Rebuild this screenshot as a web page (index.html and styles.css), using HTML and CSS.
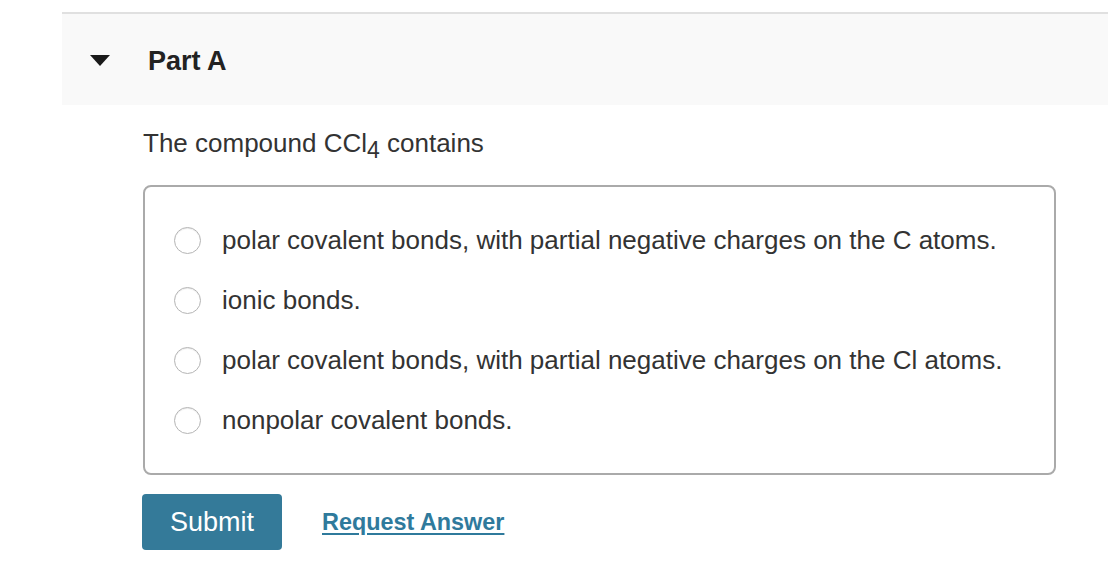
FILE: index.html
```html
<!DOCTYPE html>
<html lang="en">
<head>
<meta charset="utf-8">
<title>Part A</title>
<link rel="stylesheet" href="styles.css">
</head>
<body>
<div class="page">
  <div class="part-header">
    <svg class="caret" width="20" height="11" viewBox="0 0 20 11" aria-hidden="true"><polygon points="0,0 20,0 10,11" fill="#1a1a1a"/></svg>
    <h2 class="part-title">Part A</h2>
  </div>
  <div class="part-body">
    <p class="question">The compound CCl<sub class="sub">4</sub> contains</p>
    <div class="choices">
      <label class="choice"><span class="radio"></span><span class="choice-text">polar covalent bonds, with partial negative charges on the C atoms.</span></label>
      <label class="choice"><span class="radio"></span><span class="choice-text">ionic bonds.</span></label>
      <label class="choice"><span class="radio"></span><span class="choice-text">polar covalent bonds, with partial negative charges on the Cl atoms.</span></label>
      <label class="choice"><span class="radio"></span><span class="choice-text">nonpolar covalent bonds.</span></label>
    </div>
    <div class="actions">
      <button class="submit" type="button">Submit</button>
      <a class="request" href="#">Request Answer</a>
    </div>
  </div>
</div>
</body>
</html>
```
FILE: styles.css
```css
html, body {
  margin: 0;
  padding: 0;
  background: #ffffff;
}
body {
  font-family: "Liberation Sans", Arial, Helvetica, sans-serif;
  color: #333333;
}
.page {
  margin-left: 62px;
  padding-top: 12px;
}
.part-header {
  border-top: 2px solid #e0e0e0;
  background: #f9f9f9;
  height: 93px;
  display: flex;
  align-items: center;
  padding-left: 28px;
  box-sizing: border-box;
  padding-top: 2px;
}
.caret {
  display: block;
  flex: none;
  margin-top: -1px;
}
.part-title {
  margin: 0 0 0 38px;
  font-size: 27px;
  font-weight: bold;
  color: #222222;
  line-height: 32px;
}
.part-body {
  padding-left: 81px;
  padding-right: 52px;
}
.question {
  margin: 20px 0 24px 0;
  font-size: 26px;
  line-height: 36px;
}
.sub {
  font-size: 23px;
  line-height: 0;
  vertical-align: -6px;
}
.choices {
  border: 2px solid #aaaaaa;
  border-radius: 8px;
  padding: 23px 0;
  width: 909px;
  box-sizing: content-box;
}
.choice {
  display: flex;
  align-items: center;
  height: 60px;
  padding-left: 29px;
}
.radio {
  width: 25px;
  height: 25px;
  border: 1px solid #b5b5b5;
  border-radius: 50%;
  background: #ffffff;
  box-shadow: inset 0 1px 1px rgba(0,0,0,0.08);
  flex: none;
}
.choice-text {
  margin-left: 21px;
  font-size: 26px;
  line-height: 32px;
  color: #333333;
}
.actions {
  display: flex;
  align-items: center;
  margin-top: 19px;
}
.submit {
  width: 140px;
  height: 56px;
  margin-left: -1px;
  background: #347a99;
  color: #ffffff;
  border: none;
  border-radius: 4px;
  font-family: "Liberation Sans", Arial, Helvetica, sans-serif;
  font-size: 27px;
  padding: 0;
  cursor: pointer;
}
.request {
  margin-left: 40px;
  font-size: 23.4px;
  font-weight: bold;
  color: #2f7a9c;
  text-decoration: underline;
  text-underline-offset: 3px;
  text-decoration-thickness: 2px;
}
```
